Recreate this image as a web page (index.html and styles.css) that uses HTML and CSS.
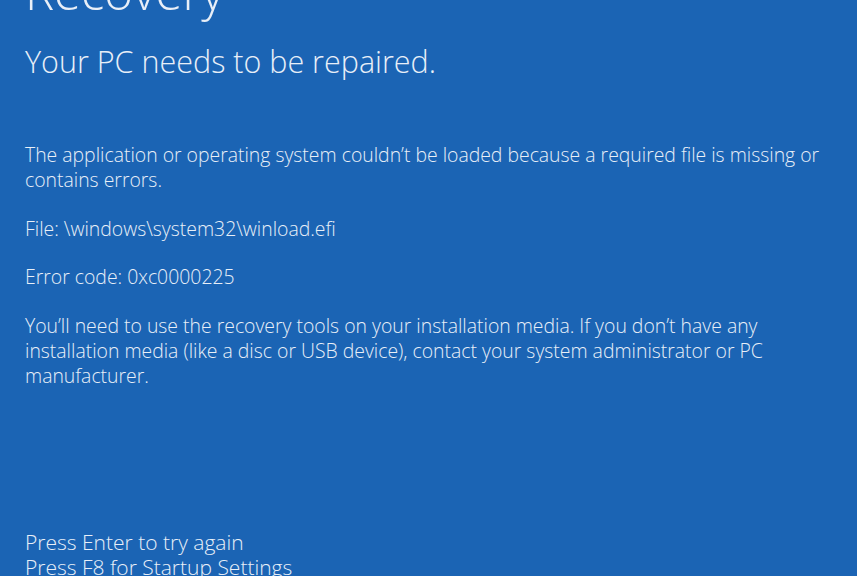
FILE: index.html
```html
<!DOCTYPE html>
<html lang="en">
<head>
<meta charset="utf-8">
<title>Recovery</title>
<link rel="stylesheet" href="styles.css">
</head>
<body>
<main class="screen">
  <section class="content">
    <h1 class="title">Recovery</h1>
    <h2 class="subtitle">Your PC needs to be repaired.</h2>
    <p class="para">The application or operating system couldn’t be loaded because a required file is missing or contains errors.</p>
    <p class="para">File: \windows\system32\winload.efi</p>
    <p class="para">Error code: 0xc0000225</p>
    <p class="para">You’ll need to use the recovery tools on your installation media. If you don’t have any installation media (like a disc or USB device), contact your system administrator or PC manufacturer.</p>
  </section>
  <footer class="actions">
    <div class="action">Press Enter to try again</div>
    <div class="action">Press F8 for Startup Settings</div>
  </footer>
</main>
</body>
</html>
```
FILE: styles.css
```css
html, body {
  margin: 0;
  padding: 0;
  height: 100%;
  overflow: hidden;
}
body {
  background: #1b64b4;
  color: #e8eff8;
  font-family: "Open Sans", "Noto Sans", sans-serif;
  font-weight: 300;
}
.screen {
  height: 576px;
  display: flex;
  flex-direction: column;
  justify-content: space-between;
  padding: 0 25px 0 25px;
  box-sizing: border-box;
}
.content {
  display: flex;
  flex-direction: column;
}
.title {
  margin: -37px 0 0 0;
  font-size: 49px;
  font-weight: 300;
  line-height: 56px;
}
.subtitle {
  margin: 23px 0 0 0;
  font-size: 30.5px;
  font-weight: 300;
  line-height: 38px;
}
.para {
  margin: 0;
  font-size: 19.4px;
  line-height: 25px;
  margin-top: 23.5px;
}
.subtitle + .para {
  margin-top: 62px;
}
.actions {
  display: flex;
  flex-direction: column;
  margin-bottom: -4px;
}
.action {
  font-size: 21px;
  line-height: 25px;
}
```
